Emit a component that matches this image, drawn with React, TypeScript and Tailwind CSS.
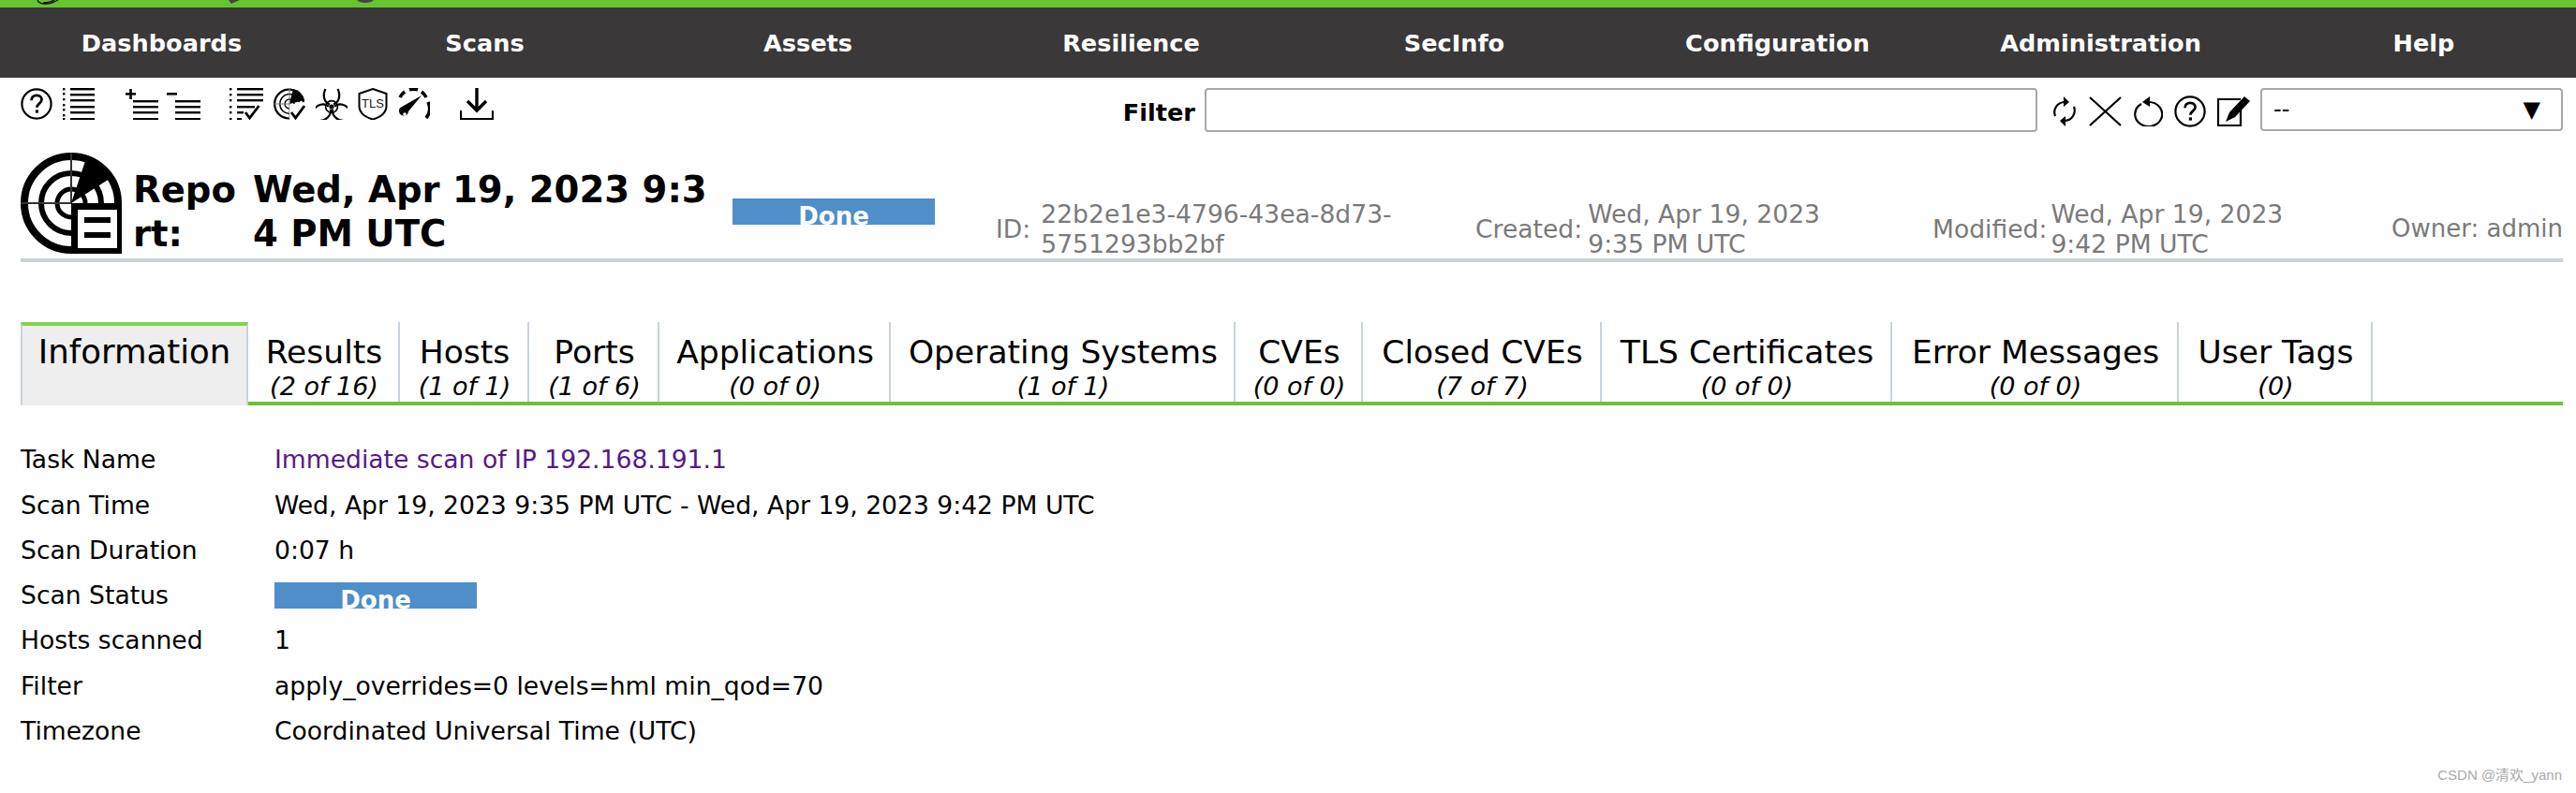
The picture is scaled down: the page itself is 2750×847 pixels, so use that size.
import React from 'react';

const NAV = ['Dashboards', 'Scans', 'Assets', 'Resilience', 'SecInfo', 'Configuration', 'Administration', 'Help'];

const TABS = [
  { label: 'Results', sub: '2 of 16', w: 'w-[162px]' },
  { label: 'Hosts', sub: '1 of 1', w: 'w-[138px]' },
  { label: 'Ports', sub: '1 of 6', w: 'w-[139px]' },
  { label: 'Applications', sub: '0 of 0', w: 'w-[247px]' },
  { label: 'Operating Systems', sub: '1 of 1', w: 'w-[368px]' },
  { label: 'CVEs', sub: '0 of 0', w: 'w-[136px]' },
  { label: 'Closed CVEs', sub: '7 of 7', w: 'w-[255px]' },
  { label: 'TLS Certificates', sub: '0 of 0', w: 'w-[310px]' },
  { label: 'Error Messages', sub: '0 of 0', w: 'w-[306px]' },
  { label: 'User Tags', sub: '0', w: 'w-[207px]' },
];

const Svg = ({ w = 34, h = 34, children }: { w?: number; h?: number; children: React.ReactNode }) => (
  <svg width={w} height={h} viewBox={`0 0 ${w} ${h}`} className="block shrink-0">{children}</svg>
);

const Lines = ({ x, ys, w }: { x: number; ys: number[]; w: number }) => (
  <>{ys.map((y) => <rect key={y} x={x} y={y} width={w} height="2.4" fill="#000" />)}</>
);

const Dots = ({ ys }: { ys: number[] }) => (
  <>{ys.map((y) => <rect key={y} x="0" y={y} width="2.4" height="2.4" fill="#000" />)}</>
);

const HelpIcon = () => (
  <Svg>
    <circle cx="17" cy="17" r="15.6" fill="none" stroke="#000" strokeWidth="2.2" />
    <path d="M11.5 13.2c0-3.4 2.4-5.4 5.6-5.4 3.2 0 5.4 1.9 5.4 4.6 0 4.1-5.2 4.2-5.2 8.4" fill="none" stroke="#000" strokeWidth="2.8" />
    <rect x="15.8" y="23.4" width="3.2" height="3.2" fill="#000" />
  </Svg>
);

const ListIcon = () => (
  <Svg>
    <Dots ys={[0, 5, 11, 17, 22, 28, 32]} />
    <Lines x={8} ys={[0, 6, 12, 19, 25, 32]} w={26} />
  </Svg>
);

const PlusListIcon = () => (
  <Svg w={36}>
    <rect x="0" y="5" width="11" height="2.6" fill="#000" />
    <rect x="4.2" y="1" width="2.6" height="11" fill="#000" />
    <Lines x={8} ys={[13, 19, 25, 32]} w={27} />
  </Svg>
);

const MinusListIcon = () => (
  <Svg w={36}>
    <rect x="0" y="5" width="11" height="2.6" fill="#000" />
    <Lines x={9} ys={[13, 19, 25, 32]} w={27} />
  </Svg>
);

const FilterListIcon = () => (
  <Svg w={36}>
    <Dots ys={[0, 6, 12, 19, 25, 32]} />
    <Lines x={8} ys={[0, 6, 12]} w={28} />
    <rect x="8" y="19" width="19" height="2.4" fill="#000" />
    <rect x="8" y="25" width="7" height="2.4" fill="#000" />
    <rect x="8" y="32" width="5" height="2.4" fill="#000" />
    <path d="M17 26l4.5 6 10-13" fill="none" stroke="#000" strokeWidth="2.8" />
  </Svg>
);

const RadarCheckIcon = () => (
  <Svg>
    <path d="M17 32.5A15.5 15.5 0 1 1 32 15" fill="none" stroke="#000" strokeWidth="2.2" />
    <path d="M17 27.5A10.5 10.5 0 1 1 27.5 15" fill="none" stroke="#000" strokeWidth="1.6" />
    <path d="M17 22A5 5 0 1 1 22 17" fill="none" stroke="#000" strokeWidth="1.4" />
    <path d="M17 17L21 1a16 16 0 0 1 12 12z" fill="#000" />
    <path d="M0 17h17M17 0v34" stroke="#777" strokeWidth="1" />
    <rect x="17.5" y="18" width="16" height="16" fill="#fff" />
    <path d="M19 26l4.5 6 9.5-13" fill="none" stroke="#000" strokeWidth="2.8" />
  </Svg>
);

const BioIcon = () => (
  <Svg>
    <g fill="none" stroke="#000" strokeWidth="2.2">
      {[0, 120, 240].map((r) => (
        <g key={r} transform={`rotate(${r} 17 20)`}>
          <path d="M10.5 1C7 8 9 15 15 17.5" />
          <path d="M23.5 1C27 8 25 15 19 17.5" />
        </g>
      ))}
      <circle cx="17" cy="20" r="6.4" strokeWidth="1.6" />
    </g>
    <circle cx="17" cy="20" r="2.6" fill="#000" />
  </Svg>
);

const TlsIcon = () => (
  <Svg w={32}>
    <path d="M16 1L30.5 6v13c0 7-6 12-14.5 14.5C7.5 31 1.5 26 1.5 19V6z" fill="none" stroke="#000" strokeWidth="2" />
    <text x="16" y="21" textAnchor="middle" className="font-['Liberation_Sans',sans-serif] text-[13px]" fill="#222">TLS</text>
  </Svg>
);

const GaugeIcon = () => (
  <Svg>
    <g fill="none" stroke="#000" strokeWidth="3.6">
      <path d="M2 10A16 16 0 0 1 7 4" />
      <path d="M12 1.8A16 16 0 0 1 21 1.8" />
      <path d="M25 4A16 16 0 0 1 30 10" />
      <path d="M32 15A16 16 0 0 1 30 32" />
    </g>
    <path d="M25 8L11 25a5 5 0 1 1-7-5z" fill="#000" />
    <circle cx="7" cy="28" r="1.8" fill="#fff" />
  </Svg>
);

const DownloadIcon = () => (
  <Svg w={36}>
    <path d="M18 0v24M8 14l10 10 10-10" fill="none" stroke="#000" strokeWidth="3.4" />
    <path d="M1 24v9h34v-9" fill="none" stroke="#000" strokeWidth="2.2" />
  </Svg>
);

const RefreshIcon = () => (
  <Svg w={28} h={32}>
    <path d="M4 21A11 11 0 0 1 14 6M24 11A11 11 0 0 1 14 26" fill="none" stroke="#000" strokeWidth="2.2" />
    <path d="M13 0l6 6-6 5zM15 21l-6 5 6 6z" fill="#000" />
  </Svg>
);

const CloseIcon = () => (
  <Svg w={35} h={32}>
    <path d="M1 1l33 30M34 1L1 31" stroke="#000" strokeWidth="2.2" />
  </Svg>
);

const ResetIcon = () => (
  <Svg w={32} h={32}>
    <path d="M9 8A14.5 13 0 1 0 17 6" fill="none" stroke="#000" strokeWidth="2.2" />
    <path d="M18 0l-8 6 8 5z" fill="#000" />
  </Svg>
);

const EditIcon = () => (
  <Svg w={35} h={32}>
    <path d="M25 3H1v28h24V14" fill="none" stroke="#000" strokeWidth="2.2" />
    <path d="M29 0l6 5-16 17-10 5 4-10z" fill="#000" />
  </Svg>
);

const ReportIcon = () => (
  <svg width="108" height="108" viewBox="0 0 108 108" className="block shrink-0">
    <path d="M54 104A50 50 0 1 1 104 54" fill="none" stroke="#000" strokeWidth="8" />
    <path d="M54 86A32 32 0 1 1 86 54" fill="none" stroke="#000" strokeWidth="6" />
    <path d="M54 69A15 15 0 1 1 69 54" fill="none" stroke="#000" strokeWidth="5" />
    <path d="M0 54h54M54 0v54" stroke="#333" strokeWidth="2" />
    <path d="M54 54L71 3a54 54 0 0 1 27 23z" fill="#000" />
    <rect x="54" y="54" width="54" height="54" fill="#000" />
    <rect x="61" y="61" width="42" height="41" fill="#fff" />
    <rect x="68" y="69" width="28" height="6" fill="#000" />
    <rect x="68" y="85" width="28" height="6" fill="#000" />
  </svg>
);

const StatusBar = () => (
  <div className="w-[216px] h-[28px] bg-[#4f8ec9] text-white font-bold text-[26px] leading-[38px] text-center">Done</div>
);

const INFO = [
  ['Task Name', 'Immediate scan of IP 192.168.191.1'],
  ['Scan Time', 'Wed, Apr 19, 2023 9:35 PM UTC - Wed, Apr 19, 2023 9:42 PM UTC'],
  ['Scan Duration', '0:07 h'],
  ['Scan Status', ''],
  ['Hosts scanned', '1'],
  ['Filter', 'apply_overrides=0 levels=hml min_qod=70'],
  ['Timezone', 'Coordinated Universal Time (UTC)'],
];

export default function App() {
  return (
    <div className="relative w-[2750px] h-[847px] overflow-hidden bg-white text-black font-['DejaVu_Sans',sans-serif]">
      {/* top strip */}
      <div className="relative h-2 bg-[#66c430]">
        <svg width="420" height="8" className="absolute left-0 top-0">
          <path d="M40 0c2 5 12 6 22 0M46 3c5 0 9-1 12-3" fill="none" stroke="#111" strokeWidth="1.4" />
          <path d="M244 0h12l-9 4z" fill="#444" />
          <path d="M381 0h18c-3 4-15 4-18 0z" fill="#444" />
        </svg>
      </div>

      {/* menu */}
      <nav className="flex h-[75px] pt-[2px] bg-[#3a3839]">
        {NAV.map((n) => (
          <div key={n} className="w-[345px] shrink-0 flex items-center justify-center text-white font-bold text-[25.6px]">{n}</div>
        ))}
      </nav>

      {/* toolbar */}
      <div className="flex h-[58px] pl-[22px] pr-[14px] pt-[11px]">
        <div className="flex gap-[11px] h-[34px]">
          <HelpIcon />
          <ListIcon />
          <div className="ml-[22px] flex gap-[8px]"><PlusListIcon /><MinusListIcon /></div>
          <div className="ml-[20px] flex gap-[11px]">
            <FilterListIcon /><RadarCheckIcon /><BioIcon /><TlsIcon /><GaugeIcon />
          </div>
          <div className="ml-[21px]"><DownloadIcon /></div>
        </div>
        <div className="ml-auto flex items-start">
          <span className="mt-[11px] mr-[10px] font-bold text-[25.6px] leading-[30px]">Filter</span>
          <div className="w-[889px] h-[47px] border-2 border-[#a8a8a8] rounded-[4px] bg-white" />
          <div className="ml-[15px] mt-[8px] flex gap-[12px] items-center">
            <RefreshIcon /><CloseIcon /><ResetIcon />
            <HelpIcon /><EditIcon />
          </div>
          <div className="ml-[11px] w-[323px] h-[46px] border-2 border-[#a8a8a8] rounded-[4px] flex items-center justify-between pl-[12px] pr-[22px] text-[24px]">
            <span>--</span>
            <span className="text-[24px]">▼</span>
          </div>
        </div>
      </div>

      {/* report heading */}
      <div className="ml-[22px] mr-[14px] h-[139px] pt-[22px] border-b-4 border-[#c8d3db] flex">
        <ReportIcon />
        <div className="ml-[12px] w-[128px] pr-[10px] mt-[16px] font-bold text-[38.6px] leading-[47px] break-all">Report:</div>
        <div className="w-[512px] pr-[12px] mt-[16px] font-bold text-[38.6px] leading-[47px] break-all">Wed, Apr 19, 2023 9:34 PM UTC</div>
        <div className="mt-[49px]"><StatusBar /></div>
        <div className="flex-1 flex items-end ml-[65px] text-[#7a7a7a] text-[26.6px] leading-[31.5px]">
          <div className="flex items-center w-[512px] h-[63px]"><span className="mr-[11px]">ID:</span><span className="w-[440px]">22b2e1e3-4796-43ea-8d73-5751293bb2bf</span></div>
          <div className="flex items-center w-[488px] h-[63px]"><span className="mr-[6px]">Created:</span><span className="w-[300px]">Wed, Apr 19, 2023 9:35 PM UTC</span></div>
          <div className="flex items-center w-[480px] h-[63px]"><span className="mr-[4px]">Modified:</span><span className="w-[300px]">Wed, Apr 19, 2023 9:42 PM UTC</span></div>
          <div className="ml-auto flex items-center h-[63px] whitespace-nowrap text-[26px]">Owner: admin</div>
        </div>
      </div>

      {/* tabs */}
      <div className="ml-[22px] mr-[14px] mt-[64px] flex h-[89px] border-b-4 border-[#6cc13a]">
        <div className="w-[243px] h-[89px] bg-[#eeeeee] border-t-4 border-t-[#87d152] border-x-2 border-x-[#c8d3db] text-center text-[35.5px] leading-[40px] pt-[8px] shrink-0 relative z-10">Information</div>
        {TABS.map((t) => (
          <div key={t.label} className={`${t.w} shrink-0 border-r-2 border-[#c8d3db] text-center pt-[12px] pl-[2px]`}>
            <div className="text-[34.5px] leading-[40px]">{t.label}</div>
            <div className="text-[27px] leading-[34px] italic">({t.sub})</div>
          </div>
        ))}
      </div>

      {/* details */}
      <div className="ml-[22px] mt-[34px] grid grid-cols-[271px_1fr] auto-rows-[48.3px] items-center text-[26.6px]">
        {INFO.map(([k, v]) => (
          <React.Fragment key={k}>
            <div>{k}</div>
            {k === 'Scan Status' ? <StatusBar /> : (
              <div className={k === 'Task Name' ? 'text-[#551a8b]' : ''}>{v}</div>
            )}
          </React.Fragment>
        ))}
      </div>

      <div className="absolute right-[15px] bottom-[8px] text-[15px] text-[#aaaaaa] font-['Liberation_Sans','Noto_Sans_CJK_SC',sans-serif]">CSDN @清欢_yann</div>
    </div>
  );
}
